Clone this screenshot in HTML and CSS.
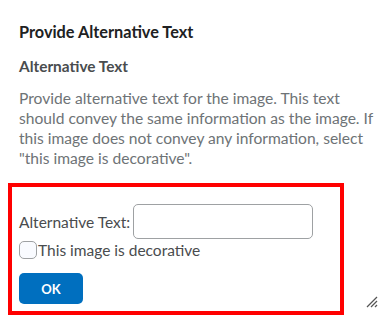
FILE: index.html
```html
<!DOCTYPE html>
<html lang="en">
<head>
    <meta charset="UTF-8">
    <meta name="viewport" content="width=device-width, initial-scale=1.0">
    <title>Provide Alternative Text</title>
    <link rel="stylesheet" href="styles.css">
</head>

<body>
    <div class="dialog">
        <h2 class="title">Provide Alternative Text</h2>
        <h3 class="subtitle">Alternative Text</h3>
        <p class="help">Provide alternative text for the image. This text should convey the same information as the image. If this image does not convey any information, select "this image is decorative".</p>

        <div class="alt-form">
            <div class="field">
                <label for="alt">Alternative Text:</label>
                <input type="text" id="alt">
            </div>
            <div class="check">
                <input type="checkbox" id="decorative">
                <label for="decorative">This image is decorative</label>
            </div>
            <button class="btn-ok">OK</button>
        </div>

        <svg class="grip" width="12" height="12" viewBox="0 0 12 12">
            <line x1="1" y1="11" x2="11" y2="1" stroke="#555" stroke-width="1.2"/>
            <line x1="5" y1="11" x2="11" y2="5" stroke="#555" stroke-width="1.2"/>
            <line x1="9" y1="11" x2="11" y2="9" stroke="#555" stroke-width="1.2"/>
        </svg>
    </div>
</body>
</html>
```

FILE: styles.css
```css
body {
    margin: 0;
    font-family: 'Lato', 'Liberation Sans', sans-serif;
    background: #ffffff;
    color: #494c4e;
}

.dialog {
    position: relative;
    height: 322px;
    padding: 20px 0 0 8px;
    box-sizing: border-box;
}

.title {
    margin: 0 0 0 11px;
    font-size: 16.3px;
    line-height: 24px;
    font-weight: 700;
    color: #202122;
}

.subtitle {
    margin: 11px 0 0 11px;
    font-size: 15.4px;
    line-height: 22px;
    font-weight: 700;
    color: #494c4e;
}

.help {
    margin: 11px 0 0 11px;
    font-size: 15.6px;
    line-height: 20px;
    color: #6e7376;
    width: 360px;
}

.alt-form {
    margin-top: 15px;
    width: 336px;
    height: 132px;
    box-sizing: border-box;
    border: 4px solid #ff0000;
    padding: 17px 7px 0;
}

.field {
    display: flex;
    align-items: center;
    gap: 3px;
    font-size: 15.5px;
}

.field input {
    width: 180px;
    height: 35px;
    box-sizing: border-box;
    border: 1px solid #9ea1a3;
    border-radius: 5px;
    font-size: 16px;
}

.check {
    display: flex;
    align-items: center;
    margin-top: 2px;
    font-size: 15.5px;
}

.check input {
    appearance: none;
    width: 18px;
    height: 18px;
    margin: 0 1px 0 0;
    border: 1px solid #9ea1a3;
    border-radius: 5px;
    background: #f9fbff;
}

.btn-ok {
    margin-top: 14px;
    width: 64px;
    height: 31px;
    border: none;
    border-radius: 5px;
    background: #006fbf;
    color: #ffffff;
    font-family: 'Lato', sans-serif;
    font-size: 13px;
    font-weight: 700;
}

.grip {
    position: absolute;
    right: 10px;
    bottom: 14px;
}
```
